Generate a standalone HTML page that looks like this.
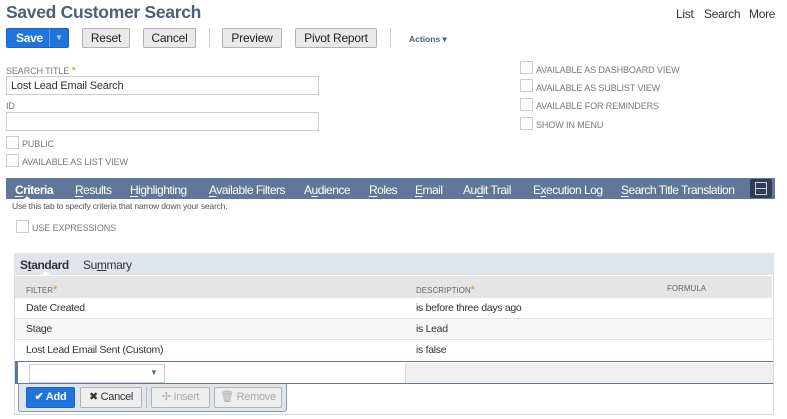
<!DOCTYPE html>
<html><head><meta charset="utf-8"><style>
*{box-sizing:border-box;margin:0;padding:0}
body{width:787px;height:419px;background:#fff;font-family:"Liberation Sans",sans-serif;position:relative;overflow:hidden;color:#333}
.a{position:absolute;white-space:nowrap}
.btn{position:absolute;top:28px;height:20px;border:1px solid #b2b2b2;background:#e9e9e9;border-radius:2px;font-size:12px;text-align:center;line-height:18px;color:#222;letter-spacing:-.2px}
.lbl{font-size:9px;color:#777;letter-spacing:-.1px}
.cb{position:absolute;width:13px;height:13px;border:1px solid #ccc;background:#fff}
.inp{position:absolute;border:1px solid #ccc;background:#fff;height:19px;font-size:11px;padding:3px 4px;letter-spacing:-.2px}
.tab{position:absolute;top:183px;font-size:12px;color:#fff;letter-spacing:-.5px}
.tab u{text-decoration-thickness:1px;text-underline-offset:2px}
.cell{position:absolute;font-size:10.5px;color:#333;letter-spacing:-.3px}
.sb{position:absolute;top:387px;height:21px;border:1px solid #b2b2b2;background:#eee;border-radius:2px;font-size:11px;line-height:19px;text-align:center;letter-spacing:-.3px}
</style></head><body>
<div class="a" style="left:6px;top:2px;font-size:17.5px;font-weight:bold;color:#4d5f79;letter-spacing:-.3px">Saved Customer Search</div>
<div class="a" style="left:676px;top:7px;font-size:12px;color:#333;letter-spacing:-.3px">List</div>
<div class="a" style="left:704px;top:7px;font-size:12px;color:#333;letter-spacing:-.3px">Search</div>
<div class="a" style="left:749px;top:7px;font-size:12px;color:#333;letter-spacing:-.3px">More</div>

<div class="a" style="left:6px;top:28px;width:63px;height:20px;background:#1f74de;border:1px solid #1665c7;border-radius:2px"></div>
<div class="a" style="left:16px;top:31px;font-size:12px;color:#fff;font-weight:bold;letter-spacing:-.3px">Save</div>
<div class="a" style="left:49px;top:29px;width:1px;height:18px;background:#5f9ce9"></div>
<div class="a" style="left:55px;top:33px;font-size:8px;color:#b8d3f5">▼</div>
<div class="btn" style="left:82px;width:48px">Reset</div>
<div class="btn" style="left:143px;width:53px">Cancel</div>
<div class="a" style="left:209px;top:28px;width:1px;height:19px;background:#ccc"></div>
<div class="btn" style="left:222px;width:60px">Preview</div>
<div class="btn" style="left:295px;width:82px">Pivot Report</div>
<div class="a" style="left:390px;top:28px;width:1px;height:19px;background:#ccc"></div>
<div class="a" style="left:409px;top:34px;font-size:8.5px;font-weight:bold;color:#4d5f79">Actions ▾</div>

<div class="a lbl" style="left:6px;top:65px">SEARCH TITLE <span style="color:#e08a20;font-size:11px">*</span></div>
<div class="inp" style="left:6px;top:76px;width:313px">Lost Lead Email Search</div>
<div class="a lbl" style="left:6px;top:101px">ID</div>
<div class="inp" style="left:6px;top:112px;width:313px"></div>
<div class="cb" style="left:6px;top:136px"></div><div class="a lbl" style="left:22px;top:139px">PUBLIC</div>
<div class="cb" style="left:6px;top:154px"></div><div class="a lbl" style="left:22px;top:157px">AVAILABLE AS LIST VIEW</div>

<div class="cb" style="left:520px;top:61px"></div><div class="a lbl" style="left:536px;top:65px">AVAILABLE AS DASHBOARD VIEW</div>
<div class="cb" style="left:520px;top:79px"></div><div class="a lbl" style="left:536px;top:83px">AVAILABLE AS SUBLIST VIEW</div>
<div class="cb" style="left:520px;top:98px"></div><div class="a lbl" style="left:536px;top:101px">AVAILABLE FOR REMINDERS</div>
<div class="cb" style="left:520px;top:117px"></div><div class="a lbl" style="left:536px;top:120px">SHOW IN MENU</div>

<div class="a" style="left:6px;top:178px;width:769px;height:21px;background:#607799"></div>
<div class="tab" style="left:15px;font-weight:bold"><u>C</u>riteria</div>
<div class="a" style="left:23px;top:196px;width:0;height:0;border-left:4px solid transparent;border-right:4px solid transparent;border-bottom:4px solid #fff"></div>
<div class="tab" style="left:75px"><u>R</u>esults</div>
<div class="tab" style="left:130px"><u>H</u>ighlighting</div>
<div class="tab" style="left:209px"><u>A</u>vailable Filters</div>
<div class="tab" style="left:304px">A<u>u</u>dience</div>
<div class="tab" style="left:369px"><u>R</u>oles</div>
<div class="tab" style="left:415px"><u>E</u>mail</div>
<div class="tab" style="left:463px">Au<u>d</u>it Trail</div>
<div class="tab" style="left:533px">E<u>x</u>ecution Log</div>
<div class="tab" style="left:621px"><u>S</u>earch Title Translation</div>
<div class="a" style="left:750px;top:179px;width:22px;height:19px;background:#2f3e55;border-radius:2px"></div>
<div class="a" style="left:755px;top:182px;width:12px;height:13px;border:1px solid #c8d0dc"></div>
<div class="a" style="left:755px;top:188px;width:12px;height:1px;background:#c8d0dc"></div>

<div class="a" style="left:12px;top:201px;font-size:8.5px;color:#555;letter-spacing:-.2px">Use this tab to specify criteria that narrow down your search.</div>
<div class="cb" style="left:16px;top:220px"></div><div class="a lbl" style="left:32px;top:223px">USE EXPRESSIONS</div>

<div class="a" style="left:14px;top:253px;width:760px;height:162px;background:#e0e4eb"></div>
<div class="a" style="left:20px;top:258px;font-size:12px;font-weight:bold;color:#333;letter-spacing:-.4px">S<u>t</u>andard</div>
<div class="a" style="left:83px;top:258px;font-size:12px;color:#333;letter-spacing:-.4px">Su<u>m</u>mary</div>
<div class="a" style="left:42px;top:271px;border-left:4px solid transparent;border-right:4px solid transparent;border-bottom:4px solid #fff"></div>
<div class="a" style="left:14px;top:275px;width:760px;height:140px;background:#fff;border:1px solid #d5d9e0;border-top:none"></div>
<div class="a" style="left:15px;top:276px;width:757px;height:22px;background:#e5e5e5"></div>
<div class="a" style="left:26px;top:284px;font-size:8px;color:#666">FILTER<span style="color:#e08a20;font-size:11px">*</span></div>
<div class="a" style="left:416px;top:284px;font-size:8px;color:#666">DESCRIPTION<span style="color:#e08a20;font-size:11px">*</span></div>
<div class="a" style="left:667px;top:284px;font-size:8px;color:#666">FORMULA</div>
<div class="a" style="left:15px;top:298px;width:757px;height:21px;border-bottom:1px solid #e2e2e2"></div>
<div class="a" style="left:15px;top:319px;width:757px;height:21px;background:#f6f6f6;border-bottom:1px solid #e2e2e2"></div>
<div class="cell" style="left:26px;top:302px">Date Created</div><div class="cell" style="left:416px;top:302px">is before three days ago</div>
<div class="cell" style="left:26px;top:323px">Stage</div><div class="cell" style="left:416px;top:323px">is Lead</div>
<div class="cell" style="left:26px;top:344px">Lost Lead Email Sent (Custom)</div><div class="cell" style="left:416px;top:344px">is false</div>
<div class="a" style="left:15px;top:361px;width:758px;height:23px;border:1px solid #607799;border-right:none;background:#fff"></div>
<div class="a" style="left:16px;top:362px;width:2px;height:21px;background:#607799"></div>
<div class="a" style="left:405px;top:363px;width:368px;height:20px;background:#efefef;border-left:1px solid #ddd"></div>
<div class="a" style="left:29px;top:364px;width:136px;height:19px;border:1px solid #ccc;background:#fff"></div>
<div class="a" style="left:150px;top:368px;font-size:8px;color:#4d6a9a">▼</div>
<div class="a" style="left:18px;top:384px;width:269px;height:28px;background:#e0e4eb;border:1px solid #8a9ab0;border-top:none;border-radius:0 0 3px 3px"></div>
<div class="sb" style="left:26px;width:49px;background:#1f74de;border-color:#1665c7;color:#fff;font-weight:bold">✔ Add</div>
<div class="sb" style="left:80px;width:62px">✖ Cancel</div>
<div class="a" style="left:146px;top:387px;width:1px;height:21px;background:#bbb"></div>
<div class="sb" style="left:151px;width:59px;color:#aaa">✢ Insert</div>
<div class="sb" style="left:214px;width:68px;color:#aaa">🗑 Remove</div>
</body></html>
